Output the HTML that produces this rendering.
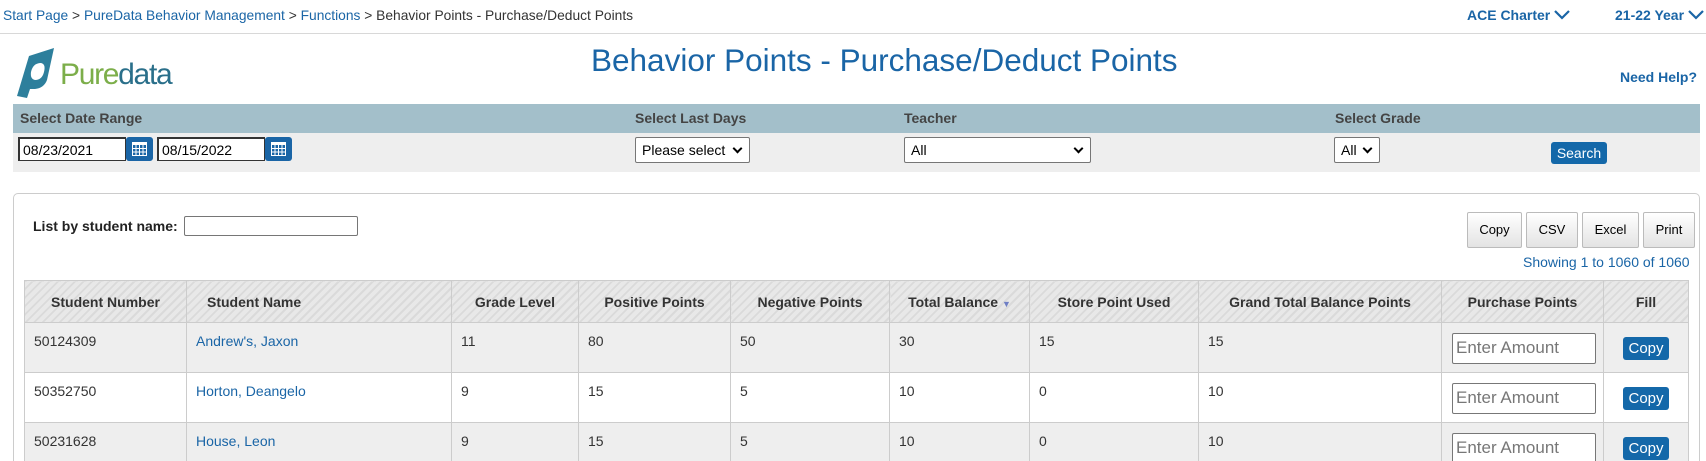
<!DOCTYPE html>
<html><head><meta charset="utf-8"><style>
*{margin:0;padding:0;box-sizing:border-box}
html,body{width:1706px;height:461px;overflow:hidden}
body{background:#fff;font-family:"Liberation Sans",Arial,sans-serif;font-size:14px;color:#333}
#w{position:relative;width:1706px;height:461px;overflow:hidden}
.a{position:absolute}
.lnk{color:#1a65a6}
.bold{font-weight:bold}
.inp{position:absolute;border:1px solid #333;border-width:2px 1px 1px 2px;background:#fff;height:24px;font-size:14px;padding:3px 3px;color:#000}
.cal{position:absolute;width:27px;height:24px;background:#1a65a6;border-radius:3px}
.cal svg{position:absolute;left:6px;top:5px}
.sel{position:absolute;border:1px solid #767676;border-radius:2px;background:#fff;height:26px;font-size:14px;padding:4px 6px;color:#000}
.sel:after{content:"";position:absolute;right:8px;top:7px;width:5px;height:5px;border-right:2px solid #000;border-bottom:2px solid #000;transform:rotate(45deg)}
.btn{position:absolute;top:212px;height:36px;border:1px solid #bbb;border-radius:2px;background:linear-gradient(#fff,#e3e3e3);font-size:13px;color:#000;text-align:center;line-height:34px}
table{position:absolute;left:24px;top:280px;width:1665px;border-collapse:collapse;font-size:14px;table-layout:fixed}
th,td{border:1px solid #ccc;text-align:left;vertical-align:top}
th{height:42px;font-weight:bold;font-size:14px;color:#333;background:repeating-linear-gradient(135deg,#e8e8e8 0 4px,#dadada 4px 6px);vertical-align:middle;text-align:center}
td{padding:10px 9px 0;height:50px}
tr.g td{background:#eee}
.ea{width:144px;height:31px;border:1px solid #777;border-radius:2px;background:#fff;color:#777;font-size:17px;padding:4px 3px;margin:0 0 0 1px}
.cp{display:inline-block;background:#1468a9;color:#fff;border-radius:3px;font-size:15px;padding:3px 5px;margin-top:4px}
</style></head><body><div id="w">
<div class="a" style="left:3px;top:8px;font-size:13.8px"><span class="lnk">Start Page</span> &gt; <span class="lnk">PureData Behavior Management</span> &gt; <span class="lnk">Functions</span> &gt; Behavior Points - Purchase/Deduct Points</div>
<div class="a lnk bold" style="left:1467px;top:7px">ACE Charter <svg width="16" height="11" viewBox="0 0 16 11"><path d="M1 2l7 7 7-7" stroke="#1a65a6" stroke-width="2.2" fill="none"/></svg></div>
<div class="a lnk bold" style="left:1615px;top:7px">21-22 Year <svg width="16" height="11" viewBox="0 0 16 11"><path d="M1 2l7 7 7-7" stroke="#1a65a6" stroke-width="2.2" fill="none"/></svg></div>
<div class="a" style="left:0;top:33px;width:1706px;height:1px;background:#d8d8d8"></div>
<svg class="a" style="left:17px;top:48px" width="40" height="50" viewBox="0 0 40 50"><path d="M12 8 L37 0 L30 32 Q27 40 18 41 L13 41 L10 50 L0 48 Z" fill="#2d7f9c"/><path d="M14 24 Q16 15 24 15 Q29 16 27 24 Q25 32 18 32 Q13 31 14 24Z" fill="#fff"/></svg>
<div class="a" style="left:60px;top:58px;font-size:30px;letter-spacing:-1.3px"><span style="color:#7cae4a">Pure</span><span style="color:#2a6f8a">data</span></div>
<div class="a lnk" style="left:591px;top:42px;font-size:31.5px">Behavior Points - Purchase/Deduct Points</div>
<div class="a lnk bold" style="left:1620px;top:69px">Need Help?</div>
<div class="a" style="left:13px;top:104px;width:1687px;height:29px;background:#a3bfca"></div>
<div class="a" style="left:13px;top:133px;width:1687px;height:39px;background:#eee"></div>
<div class="a bold" style="left:20px;top:110px;color:#444">Select Date Range</div>
<div class="a bold" style="left:635px;top:110px;color:#444">Select Last Days</div>
<div class="a bold" style="left:904px;top:110px;color:#444">Teacher</div>
<div class="a bold" style="left:1335px;top:110px;color:#444">Select Grade</div>
<div class="inp" style="left:18px;top:137px;width:108px">08/23/2021</div><div class="cal" style="left:126px;top:137px"><svg width="15" height="14" viewBox="0 0 15 14"><rect x="0.5" y="0.5" width="14" height="13" fill="none" stroke="#fff"/><rect x="0" y="0" width="15" height="3" fill="#fff"/><path d="M4 3v11M7.5 3v11M11 3v11M0 6.5h15M0 10h15" stroke="#fff"/></svg></div>
<div class="inp" style="left:157px;top:137px;width:108px">08/15/2022</div><div class="cal" style="left:265px;top:137px"><svg width="15" height="14" viewBox="0 0 15 14"><rect x="0.5" y="0.5" width="14" height="13" fill="none" stroke="#fff"/><rect x="0" y="0" width="15" height="3" fill="#fff"/><path d="M4 3v11M7.5 3v11M11 3v11M0 6.5h15M0 10h15" stroke="#fff"/></svg></div>
<div class="sel" style="left:635px;top:137px;width:115px">Please select</div>
<div class="sel" style="left:904px;top:137px;width:187px">All</div>
<div class="sel" style="left:1334px;top:137px;width:46px">All</div>
<div class="a" style="left:1551px;top:142px;width:56px;height:22px;background:#1468a9;border-radius:3px;color:#fff;text-align:center;line-height:22px;font-size:14px">Search</div>
<div class="a" style="left:13px;top:193px;width:1687px;height:290px;border:1px solid #ccc;border-radius:5px"></div>
<div class="a bold" style="left:33px;top:218px;color:#222">List by student name:</div>
<div class="a" style="left:184px;top:216px;width:174px;height:20px;border:1px solid #767676;border-radius:2px"></div>
<div class="btn" style="left:1467px;width:55px">Copy</div>
<div class="btn" style="left:1526px;width:52px">CSV</div>
<div class="btn" style="left:1582px;width:57px">Excel</div>
<div class="btn" style="left:1643px;width:52px">Print</div>
<div class="a lnk" style="left:1523px;top:254px">Showing 1 to 1060 of 1060</div>
<table>
<colgroup><col style="width:162px"><col style="width:265px"><col style="width:127px"><col style="width:152px"><col style="width:159px"><col style="width:140px"><col style="width:169px"><col style="width:243px"><col style="width:162px"><col></colgroup>
<tr><th>Student Number</th><th style="text-align:left;padding-left:20px">Student Name</th><th>Grade Level</th><th>Positive Points</th><th>Negative Points</th><th>Total Balance <span style="color:#6f7fc4;font-size:9px">▼</span></th><th>Store Point Used</th><th>Grand Total Balance Points</th><th>Purchase Points</th><th>Fill</th></tr>
<tr class="g"><td>50124309</td><td class="lnk">Andrew's, Jaxon</td><td>11</td><td>80</td><td>50</td><td>30</td><td>15</td><td>15</td><td><div class="ea">Enter Amount</div></td><td style="text-align:center"><span class="cp">Copy</span></td></tr>
<tr><td>50352750</td><td class="lnk">Horton, Deangelo</td><td>9</td><td>15</td><td>5</td><td>10</td><td>0</td><td>10</td><td><div class="ea">Enter Amount</div></td><td style="text-align:center"><span class="cp">Copy</span></td></tr>
<tr class="g"><td style="height:60px">50231628</td><td class="lnk">House, Leon</td><td>9</td><td>15</td><td>5</td><td>10</td><td>0</td><td>10</td><td><div class="ea">Enter Amount</div></td><td style="text-align:center"><span class="cp">Copy</span></td></tr>
</table>
</div></body></html>
